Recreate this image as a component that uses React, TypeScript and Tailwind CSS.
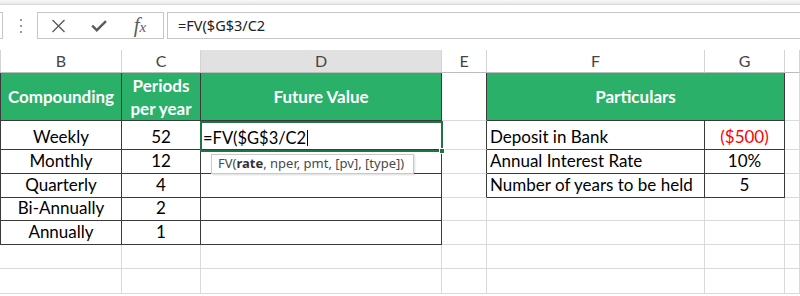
import React from "react";

const GREEN = "bg-[#2ab068]";

function Hdr({ children, className = "" }: { children?: React.ReactNode; className?: string }) {
  return (
    <div
      className={
        "flex items-center justify-center border-r border-b border-r-[#d4d4d4] border-b-[#bcbcbc] text-[16px] text-[#444444] " +
        className
      }
    >
      {children}
    </div>
  );
}

function C({ children, className = "" }: { children?: React.ReactNode; className?: string }) {
  return <div className={"flex border-r border-b " + className}>{children}</div>;
}

export default function App() {
  const dark = "border-r-[#3a3a3a] border-b-[#3a3a3a]";
  const light = "border-r-[#dadada] border-b-[#dadada]";
  const eDark = "border-r-[#3a3a3a] border-b-[#dadada]";
  const bCol = "border-l border-l-[#3a3a3a] justify-center";
  const dat = " items-end leading-[20px] pb-[2px]";
  const hd = " items-center text-white font-bold";
  const rows: [string, string][] = [
    ["Weekly", "52"],
    ["Monthly", "12"],
    ["Quarterly", "4"],
    ["Bi-Annually", "2"],
    ["Annually", "1"],
  ];
  const right: [string, React.ReactNode][] = [
    ["Deposit in Bank", <span className="text-[#ff0000]">($500)</span>],
    ["Annual Interest Rate", "10%"],
    ["Number of years to be held", "5"],
  ];
  return (
    <div
      className="relative w-[800px] h-[296px] overflow-hidden bg-white text-black"
      style={{ fontFamily: "Lato, 'Noto Sans', sans-serif" }}
    >
      {/* top band */}
      <div className="h-[5px] bg-gradient-to-b from-[#f9f9f9] to-[#e8e8e8] border-b border-[#d9d9d9]" />
      <div className="h-[7px]" />
      {/* formula bar */}
      <div className="flex h-[27px]">
        <div className="w-[3px] border-y border-r border-[#c6c6c6]" />
        <div className="w-[34px] flex flex-col items-center justify-center gap-[4px] pl-[1px]">
          <div className="w-[2px] h-[2px] bg-[#9a9a9a]" />
          <div className="w-[2px] h-[2px] bg-[#9a9a9a]" />
          <div className="w-[2px] h-[2px] bg-[#9a9a9a]" />
        </div>
        <div className="w-[127px] border border-[#c6c6c6] flex items-center">
          <div className="w-[40px] flex justify-center">
            <svg width="15" height="14" viewBox="0 0 15 14">
              <path d="M1.5 1 L13.5 13 M13.5 1 L1.5 13" stroke="#5c5c5c" strokeWidth="1.4" fill="none" />
            </svg>
          </div>
          <div className="w-[42px] flex justify-center">
            <svg width="16" height="12" viewBox="0 0 16 12">
              <path d="M1.2 5.6 L5.8 10.2 L15 1.2" stroke="#5c5c5c" strokeWidth="2.4" fill="none" />
            </svg>
          </div>
          <div
            className="w-[42px] flex justify-center items-baseline text-[#5c5c5c] italic pr-[2px]"
            style={{ fontFamily: "'Liberation Serif', serif" }}
          >
            <span className="text-[21px] leading-none">f</span>
            <span className="text-[15px] leading-none">x</span>
          </div>
        </div>
        <div className="w-[3px]" />
        <div
          className="flex-1 border-y border-l border-[#c6c6c6] pl-[10px] flex items-center text-[14.5px] text-[#222]"
          style={{ fontFamily: "'Noto Sans', sans-serif" }}
        >
          =FV($G$3/C2
        </div>
      </div>
      <div className="h-[11px]" />
      {/* grid */}
      <div className="grid grid-cols-[122px_79px_241px_45px_218px_80px_15px] grid-rows-[23px_48px_29px_24px_24px_23px_24px_24px_25px] text-[17px]">
        {/* column letters */}
        <Hdr className="border-l border-l-[#d4d4d4]">B</Hdr>
        <Hdr>C</Hdr>
        <Hdr className="bg-[#e1e1e1]">D</Hdr>
        <Hdr>E</Hdr>
        <Hdr>F</Hdr>
        <Hdr>G</Hdr>
        <Hdr />
        {/* green header */}
        <C className={GREEN + " " + dark + " " + bCol + hd}>Compounding</C>
        <C className={GREEN + " " + dark + hd + " justify-center text-center leading-[23px]"}>
          Periods
          <br />
          per year
        </C>
        <C className={GREEN + " " + dark + hd + " justify-center"}>Future Value</C>
        <C className={eDark} />
        <C className={GREEN + " " + dark + hd + " col-span-2 justify-center"}>Particulars</C>
        <C className={light} />
        {/* data rows */}
        {rows.map(([a, b], i) => (
          <React.Fragment key={a}>
            <C className={dark + " " + bCol + dat}>{a}</C>
            <C className={dark + " justify-center" + dat}>{b}</C>
            <C className={dark} />
            <C className={i < 3 ? eDark : light} />
            {i < 3 ? (
              <>
                <C className={dark + " pl-[3px]" + dat}>{right[i][0]}</C>
                <C className={dark + " justify-center" + dat}>{right[i][1]}</C>
              </>
            ) : (
              <>
                <C className={light} />
                <C className={light} />
              </>
            )}
            <C className={light} />
          </React.Fragment>
        ))}
        {[0, 1].map((r) =>
          [0, 1, 2, 3, 4, 5, 6].map((c) => <C key={r + "-" + c} className={light} />)
        )}
      </div>

      {/* active cell D2 overlay */}
      <div className="absolute left-[200px] top-[121px] w-[243px] h-[31px] border-2 border-[#217346] flex items-end pb-[3px]">
        <span className="text-[16.5px] leading-[18px] pl-[1px]">=FV($G$3/C2</span>
        <span className="ml-[1px] mb-[1px] w-[1px] h-[16px] bg-black" />
        <div className="absolute right-[-4px] bottom-[-4px] w-[6px] h-[6px] bg-[#217346] border border-white" />
      </div>

      {/* tooltip */}
      <div
        className="absolute left-[211px] top-[154px] w-[203px] h-[20px] bg-white border border-[#c9c9c9] shadow-[1px_1px_2px_rgba(0,0,0,0.15)] pl-[6px] flex items-center text-[13px] text-[#4a4a4a] whitespace-nowrap"
        style={{ fontFamily: "'Noto Sans', sans-serif" }}
      >
        FV(<b className="font-bold text-[#333]">rate</b>, nper, pmt, [pv], [type])
      </div>
    </div>
  );
}
